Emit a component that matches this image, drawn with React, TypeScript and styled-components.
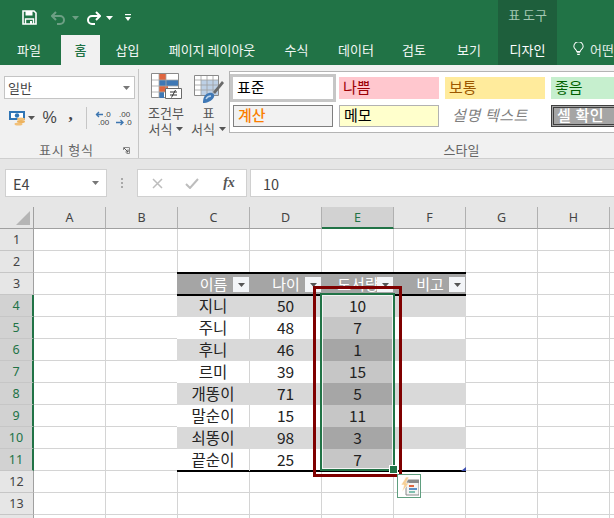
import React from "react";
import styled, { createGlobalStyle, css } from "styled-components";

const KR = `"Noto Sans CJK KR", "Noto Sans", sans-serif`;

const GlobalStyle = createGlobalStyle`
  html, body {
    margin: 0;
    width: 614px;
    height: 518px;
    overflow: hidden;
    background: #fff;
    font-family: ${KR};
  }
  * { box-sizing: border-box; }
`;

const Arrow = () => (
  <svg width="7" height="4" viewBox="0 0 7 4">
    <path d="M0 0h7L3.5 4z" fill="currentColor" />
  </svg>
);

const SaveIcon = () => (
  <svg width="15" height="15" viewBox="0 0 15 15">
    <path d="M1 1h11l2 2v11H1z" fill="none" stroke="#fff" strokeWidth="1.6" />
    <path d="M3.5 1h7v4.5h-7z" fill="#fff" />
    <path d="M3.5 14V9h8v5" fill="none" stroke="#fff" strokeWidth="1.4" />
    <path d="M8 11h2v3H8z" fill="#fff" />
  </svg>
);

const UndoIcon = () => (
  <svg width="15" height="14" viewBox="0 0 15 14">
    <path d="M1 5h8a4 4 0 0 1 0 8H6" fill="none" stroke="#6d9f84" strokeWidth="2" />
    <path d="M5 1 1 5l4 4" fill="none" stroke="#6d9f84" strokeWidth="2" />
  </svg>
);

const RedoIcon = () => (
  <svg width="15" height="14" viewBox="0 0 15 14">
    <path d="M14 5H6a4 4 0 0 0 0 8h3" fill="none" stroke="#fff" strokeWidth="2" />
    <path d="m10 1 4 4-4 4" fill="none" stroke="#fff" strokeWidth="2" />
  </svg>
);

const CustomizeIcon = () => (
  <svg width="6" height="8" viewBox="0 0 6 8">
    <path d="M0 0h6v1.2H0z" fill="#fff" />
    <path d="M0 3h6L3 7z" fill="#fff" />
  </svg>
);

const BulbIcon = () => (
  <svg width="11" height="14" viewBox="0 0 13 16">
    <path
      d="M4.500 11c0-2-3.500-3.300-3.500-6a5.500 5.500 0 0 1 11 0c0 2.700-3.500 4-3.500 6z"
      fill="none"
      stroke="#fff"
      strokeWidth="1.200"
    />
    <path d="M4.500 12.500h4M5 14.500h3" stroke="#fff" strokeWidth="1.200" />
  </svg>
);

const AccountingIcon = () => (
  <svg width="17" height="16" viewBox="0 0 17 16">
    <path d="M0 1h16v9H0z" fill="#2f75b5" />
    <path d="M2 3h12v5H2z" fill="#fff" />
    <circle cx="8" cy="5.500" r="2.200" fill="#2f75b5" />
    <ellipse cx="12" cy="9" rx="4" ry="1.500" fill="#f2c078" />
    <ellipse cx="12" cy="11.500" rx="4" ry="1.500" fill="#edb35f" />
    <ellipse cx="9.500" cy="14" rx="4" ry="1.500" fill="#f2c078" />
  </svg>
);

const DecimalIcon: React.FC<{ more?: boolean }> = ({ more }) => (
  <svg width="17" height="17" viewBox="0 0 17 17">
    {more ? (
      <>
        <path d="M1 4.500h7M4 2 1.500 4.500 4 7" fill="none" stroke="#3d76b0" strokeWidth="1.400" />
        <text x="9" y="7" fontSize="8" fill="#444" fontFamily="Liberation Sans">.0</text>
        <text x="3" y="15" fontSize="8" fill="#444" fontFamily="Liberation Sans">.00</text>
      </>
    ) : (
      <>
        <text x="3" y="7" fontSize="8" fill="#444" fontFamily="Liberation Sans">.00</text>
        <path d="M0 12.500h7M4.500 10 7 12.500 4.500 15" fill="none" stroke="#3d76b0" strokeWidth="1.400" />
        <text x="9" y="15" fontSize="8" fill="#444" fontFamily="Liberation Sans">.0</text>
      </>
    )}
  </svg>
);

const ExpandIcon = () => (
  <svg width="7" height="7" viewBox="0 0 7 7">
    <path d="M.5 3V.5H6.500V6.500H3.500" fill="none" stroke="#8a8a8a" />
    <path d="M1 1l4 4M5 2.500V5H2.500" fill="none" stroke="#5a5a5a" />
  </svg>
);

const ConditionalIcon = () => (
  <svg width="31" height="26" viewBox="0 0 31 26">
    <path d="M.5.500h27v24H.5z" fill="#fff" stroke="#8a8a8a" />
    <path d="M8 1h7v6H8z" fill="#e0663f" />
    <path d="M8 7h19v6H8z" fill="#3f78b5" />
    <path d="M8 13h9v6H8z" fill="#e0663f" />
    <path d="M8 19h5v6H8z" fill="#3f78b5" />
    <path d="M1 7h26M1 13h26M1 19h26M8 1v24M15 1v24" fill="none" stroke="#a6a6a6" strokeWidth=".8" />
    <path d="M14.500 15.500h16v10h-16z" fill="#fff" stroke="#6a6a6a" />
    <path d="M19 19h7M19 22h7M24.500 17l-4 7.500" fill="none" stroke="#333" />
  </svg>
);

const TableStyleIcon = () => (
  <svg width="30" height="29" viewBox="0 0 30 29">
    <path d="M.5.500h24v20H.5z" fill="#fff" stroke="#8a8a8a" />
    <path d="M7 5h17v15H7z" fill="#bdd0e6" />
    <path d="M1 5h23M1 10h23M1 15h23M7 1v19M13 1v19M19 1v19" fill="none" stroke="#a0a0a0" strokeWidth=".8" />
    <path d="m19 17 9-11 2 2-9 11z" fill="#6a6a6a" />
    <path d="M9 28c0-4 1-9 6-10 4-1 6 2 5 4-2 4-7 6-11 6z" fill="#3f78b5" />
    <path d="M12 24c1-2 3-3 5-3" fill="none" stroke="#bcd4ea" strokeWidth="1.400" />
  </svg>
);

const CancelIcon = () => (
  <svg width="11" height="11" viewBox="0 0 11 11">
    <path d="m1 1 9 9M10 1l-9 9" stroke="#bdbdbd" strokeWidth="1.500" />
  </svg>
);

const CheckIcon = () => (
  <svg width="14" height="11" viewBox="0 0 14 11">
    <path d="m1 6 4 4 8-9" fill="none" stroke="#bdbdbd" strokeWidth="2" />
  </svg>
);

const QuickAnalysisIcon = () => (
  <svg width="19" height="19" viewBox="0 0 19 19">
    <path d="M6 3h13v15H6z" fill="#f4f4f4" stroke="#8a8a8a" />
    <path d="M6 3h13v3H6z" fill="#8a8a8a" />
    <path d="M9 8h5v2H9z" fill="#e0663f" />
    <path d="M9 11h8v2H9z" fill="#5d8fc4" />
    <path d="M9 14h6v2H9z" fill="#7fc0b0" />
    <path d="M6 0 1 8h3l-2 7 7-9H6l3-6z" fill="#f6cf96" stroke="#fff" strokeWidth=".6" />
  </svg>
);

const Header = styled.div`
  display: flex;
  height: 65px;
  background: #217346;
  color: #fff;
`;

const HeadMain = styled.div`
  width: 498px;
  display: flex;
  flex-direction: column;
`;

const QuickBar = styled.div`
  height: 35px;
  display: flex;
  align-items: center;
  padding-left: 22px;
`;

const QuickSlot = styled.div<{ $w: number; $color?: string }>`
  width: ${({ $w }) => $w}px;
  display: flex;
  align-items: center;
  color: ${({ $color }) => $color ?? "#fff"};
`;

const Tabs = styled.div`
  height: 30px;
  display: flex;
`;

const Tab = styled.div<{ $w: number; $active?: boolean; $gap?: number }>`
  width: ${({ $w }) => $w}px;
  margin-right: ${({ $gap }) => $gap ?? 0}px;
  padding-bottom: 2px;
  display: flex;
  align-items: center;
  justify-content: center;
  font-size: 13px;
  white-space: nowrap;
  color: #f2f7f4;
  ${({ $active }) =>
    $active &&
    css`
      background: #f1f1f1;
      color: #217346;
      font-weight: 500;
    `}
`;

const ToolColumn = styled.div`
  width: 63px;
  background: #1e5f3c;
  display: flex;
  flex-direction: column;
`;

const ToolTitle = styled.div`
  height: 35px;
  padding-bottom: 6px;
  display: flex;
  align-items: center;
  justify-content: center;
  font-size: 13px;
  color: #a3c7b3;
`;

const ToolTab = styled.div`
  height: 30px;
  padding-bottom: 2px;
  display: flex;
  align-items: center;
  justify-content: center;
  font-size: 13px;
`;

const TellMe = styled.div`
  padding: 33px 0 0 16px;
  height: 65px;
  display: flex;
  align-items: center;
  gap: 6px;
  font-size: 13px;
  white-space: nowrap;
  color: #e3eee8;
`;

const Ribbon = styled.div`
  height: 94px;
  background: #f1f1f1;
  border-bottom: 1px solid #cfcfcf;
  display: flex;
  overflow: hidden;
`;

const NumberGroup = styled.div`
  width: 139px;
  height: 89px;
  border-right: 1px solid #c6c6c6;
  margin-top: 4px;
  padding: 7px 0 0 4px;
  display: flex;
  flex-direction: column;
`;

const Combo = styled.div`
  width: 131px;
  height: 23px;
  background: #fff;
  border: 1px solid #c4c4c4;
  padding: 0 4px 0 3px;
  display: flex;
  align-items: center;
  justify-content: space-between;
  font-size: 13px;
  color: #444;
`;

const NumberRow = styled.div`
  height: 24px;
  margin-top: 7px;
  padding-left: 3px;
  display: flex;
  align-items: center;
  color: #555;
`;

const NumberSlot = styled.div<{ $w: number }>`
  width: ${({ $w }) => $w}px;
  display: flex;
  justify-content: center;
  align-items: center;
  flex: none;
`;

const Percent = styled.span`
  font-family: "Liberation Sans", sans-serif;
  font-size: 16px;
  color: #444;
`;

const Comma = styled.span`
  font-family: "Liberation Serif", serif;
  font-size: 17px;
  font-weight: bold;
  line-height: 12px;
  padding-bottom: 6px;
  color: #444;
`;

const Divider = styled.div`
  width: 1px;
  height: 22px;
  background: #c6c6c6;
  margin: 0 6px 0 9px;
  flex: none;
`;

const GroupLabel = styled.div`
  font-size: 13px;
  line-height: 16px;
  color: #666;
  text-align: center;
`;

const NumberFooter = styled.div`
  margin-top: 12px;
  padding-right: 8px;
  display: flex;
  align-items: center;
`;

const NumberLabel = styled(GroupLabel)`
  flex: 1;
  padding-left: 6px;
  letter-spacing: 0.8px;
`;

const StyleButtons = styled.div`
  width: 90px;
  display: flex;
  padding: 8px 0 0 5px;
`;

const BigButton = styled.div<{ $w: number; $drop?: number }>`
  width: ${({ $w }) => $w}px;
  display: flex;
  flex-direction: column;
  align-items: center;
  font-size: 13px;
  line-height: 16px;
  color: #444;
`;

const BigIcon = styled.div<{ $drop?: number }>`
  height: 32px;
  padding-top: ${({ $drop }) => $drop ?? 0}px;
  display: flex;
  align-items: flex-start;
`;

const BigLine = styled.div`
  display: flex;
  align-items: center;
  gap: 4px;
  height: 16px;
  color: #555;
`;

const StyleGroup = styled.div`
  flex: 1;
  min-width: 0;
  display: flex;
  flex-direction: column;
`;

const Gallery = styled.div`
  margin-top: 6px;
  height: 62px;
  background: #fff;
  border: solid #b4b4b4;
  border-width: 1px 0 1px 1px;
  padding: 5px 0 0 3px;
  display: grid;
  grid-template-columns: repeat(4, 100px);
  grid-template-rows: 22px 22px;
  gap: 6px;
`;

type Tone = "normal" | "bad" | "neutral" | "good" | "calc" | "memo" | "note" | "check";

const toneStyles: Record<Tone, ReturnType<typeof css>> = {
  normal: css`
    background: #fff;
    color: #000;
    outline: 3px solid #c6c6c6;
  `,
  bad: css`
    background: #ffc7ce;
    color: #9c0006;
  `,
  neutral: css`
    background: #ffeb9c;
    color: #9c5700;
  `,
  good: css`
    background: #c6efce;
    color: #006100;
  `,
  calc: css`
    background: #f2f2f2;
    color: #fa7d00;
    border: 1px solid #7f7f7f;
    font-weight: 500;
  `,
  memo: css`
    background: #ffffcc;
    color: #000;
    border: 1px solid #b2b2b2;
  `,
  note: css`
    background: #fff;
    color: #7f7f7f;
    font-style: italic;
    padding-left: 7px;
    letter-spacing: 0.6px;
  `,
  check: css`
    background: #a5a5a5;
    color: #fff;
    border: 3px double #3f3f3f;
    font-weight: 500;
    padding-left: 3px;
    letter-spacing: 0.6px;
  `,
};

const StyleCell = styled.div<{ $tone: Tone }>`
  font-size: 15px;
  line-height: 20px;
  padding-left: 4px;
  padding-bottom: 3px;
  display: flex;
  align-items: center;
  white-space: nowrap;
  overflow: hidden;
  ${({ $tone }) => toneStyles[$tone]}
`;

const StyleLabel = styled(GroupLabel)`
  margin-top: 9px;
  width: 385px;
  padding-left: 80px;
`;

const FormulaBand = styled.div`
  height: 48px;
  background: #e6e6e6;
  padding: 10px 0 10px 5px;
  display: flex;
  align-items: stretch;
`;

const NameBox = styled.div`
  width: 102px;
  background: #fff;
  border: 1px solid #d0d0d0;
  padding: 0 7px;
  display: flex;
  align-items: center;
  justify-content: space-between;
  font-size: 14.5px;
  color: #444;
`;

const NameArrow = styled.span`
  display: flex;
  color: #777;
`;

const Grip = styled.div`
  width: 30px;
  display: flex;
  align-items: center;
  justify-content: center;
`;

const GripDots = styled.div`
  width: 2px;
  height: 10px;
  background: repeating-linear-gradient(#a8a8a8 0 2px, transparent 2px 4px);
`;

const FunctionBox = styled.div`
  width: 110px;
  background: #fff;
  border: 1px solid #d0d0d0;
  display: flex;
  align-items: center;
  padding-left: 13px;
  color: #555;
`;

const FxSlot = styled.div<{ $w: number }>`
  width: ${({ $w }) => $w}px;
  display: flex;
  justify-content: center;
`;

const Fx = styled.span`
  font-family: "Liberation Serif", serif;
  font-style: italic;
  font-weight: bold;
  font-size: 14px;
  color: #555;
`;

const FormulaInput = styled.div`
  flex: 1;
  margin-left: 3px;
  background: #fff;
  border: solid #d0d0d0;
  border-width: 1px 0 1px 1px;
  padding-left: 12px;
  display: flex;
  align-items: center;
  font-size: 14.5px;
  color: #444;
`;

const Sheet = styled.div`
  position: relative;
  display: grid;
  grid-template-columns: 34px repeat(9, 72px);
  grid-auto-rows: 22px;
  height: 311px;
  overflow: hidden;
  background: #fff;
`;

const Corner = styled.div`
  background: #e6e6e6;
  border-right: 1px solid #a0a0a0;
  border-bottom: 1px solid #a0a0a0;
  padding: 4px 3px 3px 16px;
  display: flex;
`;

const CornerMark = styled.div`
  flex: 1;
  background: #b5b5b5;
  clip-path: polygon(100% 0, 100% 100%, 0 100%);
`;

const ColHead = styled.div<{ $selected?: boolean }>`
  background: ${({ $selected }) => ($selected ? "#d2d2d2" : "#e6e6e6")};
  border-right: 1px solid #b0b0b0;
  border-bottom: ${({ $selected }) => ($selected ? "2px solid #217346" : "1px solid #a0a0a0")};
  display: flex;
  align-items: center;
  justify-content: center;
  font-family: "Noto Sans", sans-serif;
  font-size: 12.5px;
  color: ${({ $selected }) => ($selected ? "#217346" : "#444")};
`;

const RowHead = styled.div<{ $selected?: boolean }>`
  background: ${({ $selected }) => ($selected ? "#d2d2d2" : "#e6e6e6")};
  border-bottom: 1px solid #c6c6c6;
  border-right: ${({ $selected }) => ($selected ? "2px solid #217346" : "1px solid #a0a0a0")};
  display: flex;
  align-items: center;
  justify-content: center;
  font-family: "Noto Sans", sans-serif;
  font-size: 12.5px;
  color: ${({ $selected }) => ($selected ? "#217346" : "#444")};
`;

const Cell = styled.div`
  border-right: 1px solid #d4d4d4;
  border-bottom: 1px solid #d4d4d4;
`;

const HeadCell = styled.div<{ $first?: boolean }>`
  position: relative;
  z-index: 1;
  background: #a5a5a5;
  box-shadow: 0 -1px #000, inset 0 1px #000, inset 0 -1px #000, 0 1px #000;
  margin-left: ${({ $first }) => ($first ? "-1px" : 0)};
  padding-bottom: 2px;
  display: flex;
  align-items: center;
  justify-content: center;
  font-size: 15px;
  color: #fff;
`;

const FilterButton = styled.span`
  position: absolute;
  right: 1px;
  top: 4px;
  width: 16px;
  height: 15px;
  background: #f3f5f8;
  color: #555;
  display: flex;
  align-items: center;
  justify-content: center;
`;

const DataCell = styled.div<{ $band?: boolean; $fill?: string; $first?: boolean; $last?: boolean }>`
  position: relative;
  z-index: ${({ $last }) => ($last ? 1 : 0)};
  background: ${({ $fill, $band }) => $fill ?? ($band ? "#d9d9d9" : "#fff")};
  border-right: 1px solid ${({ $band, $fill }) => ($fill || $band ? "transparent" : "#d4d4d4")};
  margin-left: ${({ $first }) => ($first ? "-1px" : 0)};
  box-shadow: ${({ $last }) => ($last ? "inset 0 -1px #000, 0 1px #000" : "none")};
  display: flex;
  align-items: center;
  justify-content: center;
  padding-bottom: 2px;
  font-size: 15.5px;
  color: #222;
`;

const TableGrip = styled.div`
  position: absolute;
  left: 461px;
  top: 260px;
  width: 5px;
  height: 4px;
  z-index: 3;
  background: #3f4fb0;
  clip-path: polygon(100% 0, 100% 100%, 0 100%);
`;

const Selection = styled.div`
  position: absolute;
  left: 320px;
  top: 86px;
  width: 75px;
  height: 178px;
  z-index: 3;
  border: 2px solid #217346;
  box-shadow: inset 0 0 0 1px #f4f4f4;
`;

const FillHandle = styled.div`
  position: absolute;
  right: -4px;
  bottom: -4px;
  width: 7px;
  height: 7px;
  background: #217346;
  outline: 1px solid #fff;
`;

const Marker = styled.div`
  position: absolute;
  left: 313px;
  top: 79px;
  width: 89px;
  height: 191px;
  z-index: 4;
  border: 3px solid #7f0000;
`;

const QuickAnalysis = styled.div`
  position: absolute;
  left: 397px;
  top: 267px;
  width: 24px;
  height: 24px;
  z-index: 4;
  background: #fff;
  border: 1px solid #5f9e7f;
  display: flex;
  align-items: center;
  justify-content: center;
`;

const COLUMNS = ["A", "B", "C", "D", "E", "F", "G", "H"];

const PEOPLE: [string, number, number][] = [
  ["지니", 50, 10],
  ["주니", 48, 7],
  ["후니", 46, 1],
  ["르미", 39, 15],
  ["개똥이", 71, 5],
  ["말순이", 15, 11],
  ["쇠똥이", 98, 3],
  ["끝순이", 25, 7],
];

const bookFill = (index: number) => {
  if (index === 0) return "#d9d9d9";
  return index % 2 === 1 || index === 7 ? "#c6c6c6" : "#a6a6a6";
};

const Blank: React.FC<{ count: number }> = ({ count }) => (
  <>
    {Array.from({ length: count }, (_, i) => (
      <Cell key={i} />
    ))}
  </>
);

const App: React.FC = () => {
  return (
    <>
      <GlobalStyle />
      <Header>
        <HeadMain>
          <QuickBar>
            <QuickSlot $w={29}>
              <SaveIcon />
            </QuickSlot>
            <QuickSlot $w={21}>
              <UndoIcon />
            </QuickSlot>
            <QuickSlot $w={14} $color="#6d9f84">
              <Arrow />
            </QuickSlot>
            <QuickSlot $w={20}>
              <RedoIcon />
            </QuickSlot>
            <QuickSlot $w={19}>
              <Arrow />
            </QuickSlot>
            <QuickSlot $w={8}>
              <CustomizeIcon />
            </QuickSlot>
          </QuickBar>
          <Tabs>
            <Tab $w={58} $gap={3}>파일</Tab>
            <Tab $w={39} $active>홈</Tab>
            <Tab $w={55}>삽입</Tab>
            <Tab $w={114}>페이지 레이아웃</Tab>
            <Tab $w={55}>수식</Tab>
            <Tab $w={64}>데이터</Tab>
            <Tab $w={52}>검토</Tab>
            <Tab $w={58}>보기</Tab>
          </Tabs>
        </HeadMain>
        <ToolColumn>
          <ToolTitle>표 도구</ToolTitle>
          <ToolTab>디자인</ToolTab>
        </ToolColumn>
        <TellMe>
          <BulbIcon />
          어떤
        </TellMe>
      </Header>

      <Ribbon>
        <NumberGroup>
          <Combo>
            일반
            <NameArrow>
              <Arrow />
            </NameArrow>
          </Combo>
          <NumberRow>
            <NumberSlot $w={20}>
              <AccountingIcon />
            </NumberSlot>
            <NumberSlot $w={8}>
              <Arrow />
            </NumberSlot>
            <NumberSlot $w={29}>
              <Percent>%</Percent>
            </NumberSlot>
            <NumberSlot $w={13}>
              <Comma>,</Comma>
            </NumberSlot>
            <Divider />
            <NumberSlot $w={20}>
              <DecimalIcon more />
            </NumberSlot>
            <NumberSlot $w={22}>
              <DecimalIcon />
            </NumberSlot>
          </NumberRow>
          <NumberFooter>
            <NumberLabel>표시 형식</NumberLabel>
            <ExpandIcon />
          </NumberFooter>
        </NumberGroup>

        <StyleButtons>
          <BigButton $w={44}>
            <BigIcon>
              <ConditionalIcon />
            </BigIcon>
            <BigLine>조건부</BigLine>
            <BigLine>
              서식 <Arrow />
            </BigLine>
          </BigButton>
          <BigButton $w={41}>
            <BigIcon $drop={2}>
              <TableStyleIcon />
            </BigIcon>
            <BigLine>표</BigLine>
            <BigLine>
              서식 <Arrow />
            </BigLine>
          </BigButton>
        </StyleButtons>

        <StyleGroup>
          <Gallery>
            <StyleCell $tone="normal">표준</StyleCell>
            <StyleCell $tone="bad">나쁨</StyleCell>
            <StyleCell $tone="neutral">보통</StyleCell>
            <StyleCell $tone="good">좋음</StyleCell>
            <StyleCell $tone="calc">계산</StyleCell>
            <StyleCell $tone="memo">메모</StyleCell>
            <StyleCell $tone="note">설명 텍스트</StyleCell>
            <StyleCell $tone="check">셀 확인</StyleCell>
          </Gallery>
          <StyleLabel>스타일</StyleLabel>
        </StyleGroup>
      </Ribbon>

      <FormulaBand>
        <NameBox>
          E4
          <NameArrow>
            <Arrow />
          </NameArrow>
        </NameBox>
        <Grip>
          <GripDots />
        </Grip>
        <FunctionBox>
          <FxSlot $w={12}>
            <CancelIcon />
          </FxSlot>
          <FxSlot $w={58}>
            <CheckIcon />
          </FxSlot>
          <FxSlot $w={16}>
            <Fx>fx</Fx>
          </FxSlot>
        </FunctionBox>
        <FormulaInput>10</FormulaInput>
      </FormulaBand>

      <Sheet>
        <Corner>
          <CornerMark />
        </Corner>
        {COLUMNS.map((c) => (
          <ColHead key={c} $selected={c === "E"}>
            {c}
          </ColHead>
        ))}
        <ColHead />

        <RowHead>1</RowHead>
        <Blank count={9} />
        <RowHead>2</RowHead>
        <Blank count={9} />

        <RowHead>3</RowHead>
        <Blank count={2} />
        <HeadCell $first>
          이름
          <FilterButton>
            <Arrow />
          </FilterButton>
        </HeadCell>
        <HeadCell>
          나이
          <FilterButton>
            <Arrow />
          </FilterButton>
        </HeadCell>
        <HeadCell>
          도서량
          <FilterButton>
            <Arrow />
          </FilterButton>
        </HeadCell>
        <HeadCell>
          비고
          <FilterButton>
            <Arrow />
          </FilterButton>
        </HeadCell>
        <Blank count={3} />

        {PEOPLE.map(([name, age, books], i) => {
          const band = i % 2 === 0;
          const last = i === PEOPLE.length - 1;
          return (
            <React.Fragment key={name}>
              <RowHead $selected>{i + 4}</RowHead>
              <Blank count={2} />
              <DataCell $band={band} $first $last={last}>
                {name}
              </DataCell>
              <DataCell $band={band} $last={last}>
                {age}
              </DataCell>
              <DataCell $fill={bookFill(i)} $last={last}>
                {books}
              </DataCell>
              <DataCell $band={band} $last={last} />
              <Blank count={3} />
            </React.Fragment>
          );
        })}

        <RowHead>12</RowHead>
        <Blank count={9} />
        <RowHead>13</RowHead>
        <Blank count={9} />
        <RowHead />
        <Blank count={9} />

        <TableGrip />
        <Selection>
          <FillHandle />
        </Selection>
        <Marker />
        <QuickAnalysis>
          <QuickAnalysisIcon />
        </QuickAnalysis>
      </Sheet>
    </>
  );
};

export default App;
